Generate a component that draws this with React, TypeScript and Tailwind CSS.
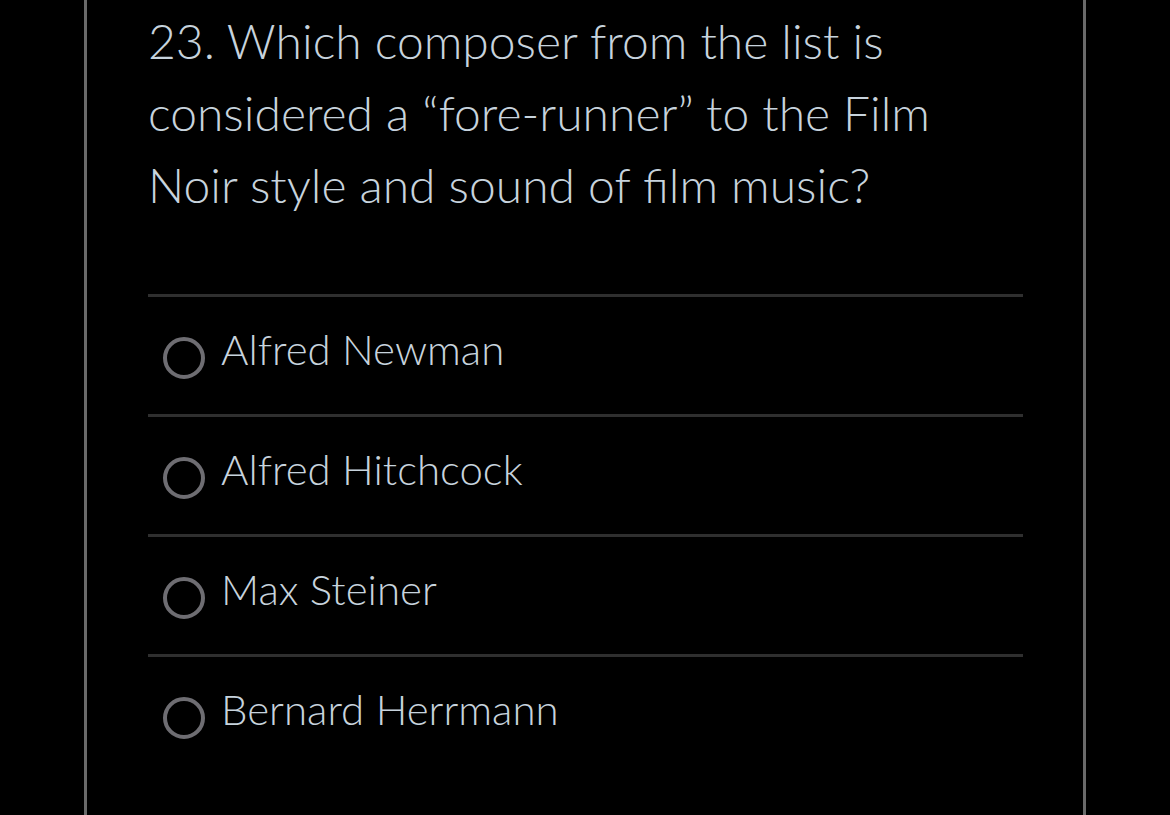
const options = ['Alfred Newman', 'Alfred Hitchcock', 'Max Steiner', 'Bernard Herrmann'];

export default function App() {
  return (
    <div className="h-[815px] w-[1170px] overflow-hidden bg-black font-['Lato','Liberation_Sans',sans-serif]">
      <div className="ml-[84px] h-full w-[1002px] border-x-[3px] border-[#6a6a6a] pl-[61px] pr-[60px] pt-[5px]">
        <p className="text-[48px] font-light leading-[72px] text-[#c7d3dd]">
          23. Which composer from the list is considered a “fore-runner” to the Film Noir style and sound of film music?
        </p>
        <div className="mt-[73px]">
          {options.map((label) => (
            <label key={label} className="flex h-[120px] items-start border-t-[3px] border-[#2f2f2f] pt-[28px]">
              <span className="ml-[15px] mt-[12px] box-border h-[42px] w-[42px] shrink-0 rounded-full border-4 border-[#6e6d72]" />
              <span className="ml-[16px] text-[42px] font-light leading-[48px] text-[#c7d3dd]">{label}</span>
            </label>
          ))}
        </div>
      </div>
    </div>
  );
}
